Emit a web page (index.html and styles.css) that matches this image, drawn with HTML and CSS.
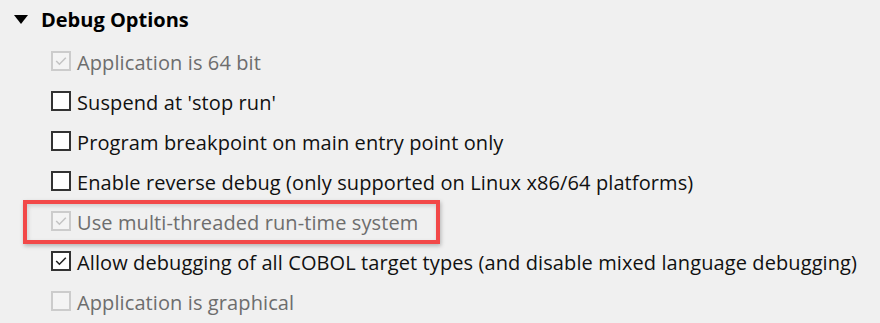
FILE: index.html
```html
<!DOCTYPE html>
<html>
<head>
    <link rel="stylesheet" href="styles.css">
</head>
<body>
    <div class="panel">
        <div class="section-head">
            <span class="arrow"></span>
            <span class="section-title">Debug Options</span>
        </div>

        <div class="options">
            <label class="option disabled">
                <span class="box checked"><svg viewBox="0 0 20 20"><polyline points="4,10 8,14 16,6"/></svg></span>
                Application is 64 bit
            </label>
            <label class="option">
                <span class="box"></span>
                Suspend at 'stop run'
            </label>
            <label class="option">
                <span class="box"></span>
                Program breakpoint on main entry point only
            </label>
            <label class="option">
                <span class="box"></span>
                Enable reverse debug (only supported on Linux x86/64 platforms)
            </label>
            <label class="option disabled highlight">
                <span class="box checked"><svg viewBox="0 0 20 20"><polyline points="4,10 8,14 16,6"/></svg></span>
                Use multi-threaded run-time system
            </label>
            <label class="option">
                <span class="box checked"><svg viewBox="0 0 20 20"><polyline points="4,10 8,14 16,6"/></svg></span>
                Allow debugging of all COBOL target types (and disable mixed language debugging)
            </label>
            <label class="option disabled">
                <span class="box"></span>
                Application is graphical
            </label>
        </div>
    </div>
</body>
</html>
```

FILE: styles.css
```css
body {
    margin: 0;
    background-color: #f0f0f0;
    font-family: "Open Sans", "Noto Sans", sans-serif;
    color: #111;
}

.panel {
    width: 880px;
    height: 323px;
    overflow: hidden;
}

.section-head {
    display: flex;
    align-items: center;
    height: 38px;
    padding-left: 14px;
}

.arrow {
    width: 0;
    height: 0;
    border-left: 7px solid transparent;
    border-right: 7px solid transparent;
    border-top: 9px solid #000;
    margin-right: 13px;
}

.section-title {
    font-size: 20px;
    font-weight: bold;
    color: #000;
}

.options {
    padding-left: 51px;
    padding-top: 3px;
}

.option {
    position: relative;
    display: flex;
    align-items: center;
    height: 40px;
    font-size: 20px;
    letter-spacing: 0.1px;
    padding-top: 2px;
    box-sizing: border-box;
}

.box {
    box-sizing: border-box;
    width: 20px;
    height: 20px;
    border: 2px solid #333;
    background: #fff;
    margin-right: 6px;
    margin-top: -2px;
    flex-shrink: 0;
}

.box svg {
    display: block;
    width: 16px;
    height: 16px;
}

.box polyline {
    fill: none;
    stroke: #222;
    stroke-width: 2;
}

.disabled {
    color: #6d6d6d;
}

.disabled .box {
    border-color: #ccc;
    background: #f4f4f4;
}

.disabled .box polyline {
    stroke: #c4c4c4;
}

.highlight::before {
    content: "";
    position: absolute;
    left: -28px;
    top: -1px;
    width: 409px;
    height: 36px;
    border: 4px solid #f24848;
    box-shadow: 1px 2px 4px rgba(0, 0, 0, 0.25), inset 1px 2px 4px rgba(0, 0, 0, 0.15);
}
```
